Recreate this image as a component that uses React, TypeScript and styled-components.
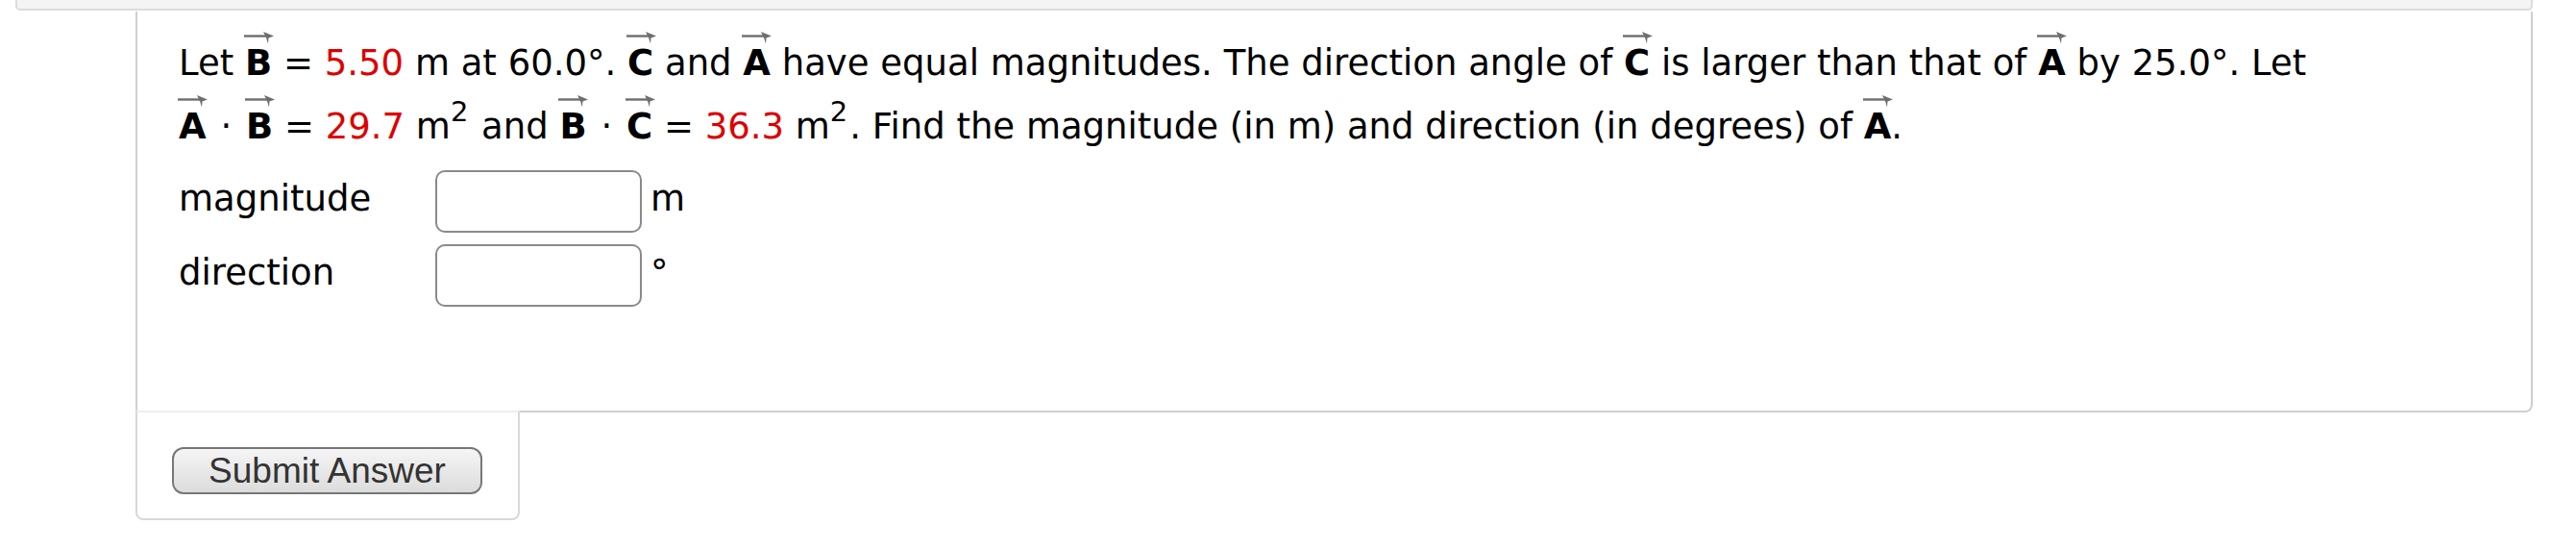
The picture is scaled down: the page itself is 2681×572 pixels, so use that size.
import styled, { createGlobalStyle } from 'styled-components';

const GlobalStyle = createGlobalStyle`
    body {
        margin: 0;
        background: #fff;
        font-family: "DejaVu Sans", Verdana, sans-serif;
        color: #000;
    }
`;

const Page = styled.div`
    width: 2681px;
`;

const TopBar = styled.div`
    box-sizing: border-box;
    margin-left: 16px;
    width: 2620px;
    height: 11px;
    background: #f4f4f4;
    border: 2px solid #dcdcdc;
    border-top: none;
    border-radius: 0 0 5px 5px;
`;

const Panel = styled.div`
    box-sizing: border-box;
    margin: 1px 0 0 141px;
    width: 2495px;
    padding: 21px 0 108px 43px;
    border: 2px solid #cfcfcf;
    border-top: none;
    border-bottom-right-radius: 8px;
`;

const Question = styled.p`
    margin: 0;
    font-size: 37px;
    line-height: 66px;
    white-space: nowrap;
`;

const Red = styled.span`
    color: #dd0000;
`;

const Sup = styled.sup`
    font-size: 29px;
    line-height: 0;
    vertical-align: 18px;
    padding-right: 2px;
`;

const VecWrap = styled.span`
    position: relative;
    display: inline-block;
    font-weight: bold;
`;

const Arrow = styled.svg`
    position: absolute;
    left: -1px;
    top: 0px;
    width: 32px;
    height: 13px;
`;

const Vec = ({ children }: { children: string }) => (
    <VecWrap>
        {children}
        <Arrow viewBox="0 0 32 13">
            <line x1="0" y1="4.5" x2="26" y2="4.5" stroke="#6e6e6e" strokeWidth="2.4" />
            <path d="M20 0 L31 4.6 L25.5 6.4 L25 12.5 L23.2 6.8 Z" fill="#6e6e6e" />
        </Arrow>
    </VecWrap>
);

const Dot = styled.span`
    padding: 0 3px;
`;

const AnswerGrid = styled.div`
    display: grid;
    grid-template-columns: 267px 215px auto;
    row-gap: 12px;
    align-items: center;
    margin-top: 12px;
    font-size: 37px;
`;

const Label = styled.span`
    line-height: 40px;
    padding-bottom: 5px;
`;

const Field = styled.input`
    box-sizing: border-box;
    width: 215px;
    height: 65px;
    margin: 0;
    border: 2px solid #8a8a8a;
    border-radius: 10px;
    background: #fff;
    outline: none;
`;

const Unit = styled.span`
    padding: 0 0 5px 9px;
    line-height: 40px;
`;

const SubmitBox = styled.div`
    box-sizing: border-box;
    position: relative;
    margin: -2px 0 0 141px;
    width: 400px;
    padding: 36px 0 25px 36px;
    border: 2px solid #d8d8d8;
    border-top-color: #eeeeee;
    border-radius: 0 0 8px 8px;
    background: #fff;
`;

const SubmitButton = styled.button`
    box-sizing: border-box;
    display: block;
    width: 323px;
    height: 49px;
    padding: 0;
    font-family: "Liberation Sans", Arial, sans-serif;
    font-size: 37px;
    line-height: 45px;
    color: #333;
    border: 2px solid #777;
    border-radius: 12px;
    background: linear-gradient(#f5f5f5, #dcdcdc);
`;

const App = () => {
    return (
        <Page>
            <GlobalStyle />
            <TopBar />
            <Panel>
                <Question>
                    Let <Vec>B</Vec> = <Red>5.50</Red> m at 60.0°. <Vec>C</Vec> and <Vec>A</Vec> have
                    equal magnitudes. The direction angle of <Vec>C</Vec> is larger than that of{' '}
                    <Vec>A</Vec> by 25.0°. Let
                    <br />
                    <Vec>A</Vec> <Dot>·</Dot> <Vec>B</Vec> = <Red>29.7</Red> m<Sup>2</Sup> and{' '}
                    <Vec>B</Vec> <Dot>·</Dot> <Vec>C</Vec> = <Red>36.3</Red> m<Sup>2</Sup>. Find the
                    magnitude (in m) and direction (in degrees) of <Vec>A</Vec>.
                </Question>
                <AnswerGrid>
                    <Label>magnitude</Label>
                    <Field type="text" />
                    <Unit>m</Unit>
                    <Label>direction</Label>
                    <Field type="text" />
                    <Unit>°</Unit>
                </AnswerGrid>
            </Panel>
            <SubmitBox>
                <SubmitButton>Submit Answer</SubmitButton>
            </SubmitBox>
        </Page>
    );
};

export default App;
